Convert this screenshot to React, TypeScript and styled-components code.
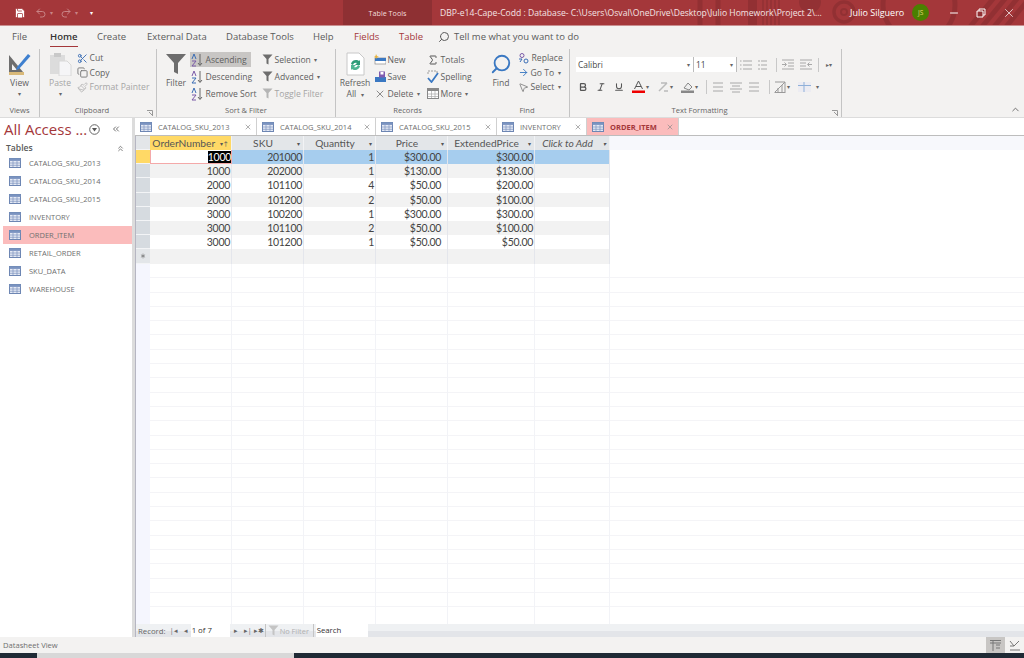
import React from 'react';
import styled, { createGlobalStyle } from 'styled-components';
import { Scissors, Copy, Paintbrush, Search, Sigma, X, ArrowRight, MousePointer2, Bold, Italic, Underline, ChevronsLeft, ChevronsUp, ChevronUp, Undo2, Redo2, Save, Minus, Asterisk } from 'lucide-react';

const GlobalStyle = createGlobalStyle`
  html, body { margin: 0; padding: 0; height: 100%; background: #fff; overflow: hidden; }
  body { font-family: "Open Sans", "Liberation Sans", sans-serif; color: #444; }
  #root { height: 658px; }
`;

const RED = '#a4373a';

const Page = styled.div`
  width: 1024px;
  height: 658px;
  display: flex;
  flex-direction: column;
  overflow: hidden;
`;

/* title bar */
const TitleBar = styled.div`
  position: relative;
  height: 25px;
  flex: none;
  display: flex;
  align-items: center;
  background: ${RED};
  color: #f4e4e4;
  font-size: 8.5px;
  overflow: hidden;
`;
const Pattern = styled.svg`
  position: absolute;
  right: 0;
  top: 0;
`;
const Qat = styled.div`
  width: 343px;
  flex: none;
  display: flex;
  align-items: center;
  padding-left: 14px;
  box-sizing: border-box;
  gap: 3px;
`;
const QatCaret = styled.span<{ $dim?: boolean; $mr?: number }>`
  font-size: 6px;
  color: ${(p) => (p.$dim ? '#c98486' : '#fff')};
  margin-right: ${(p) => p.$mr ?? 4}px;
`;
const ToolsLabel = styled.div`
  width: 89px;
  height: 25px;
  flex: none;
  display: flex;
  align-items: center;
  justify-content: center;
  background: #8e3033;
  color: #f2dcdc;
  font-size: 7.2px;
`;
const DocTitle = styled.div`
  margin-left: 8px;
  width: 410px;
  flex: none;
  white-space: nowrap;
  z-index: 1;
  font-size: 8.6px;
`;
const UserName = styled.div`
  font-size: 9px;
  color: #fff;
  z-index: 1;
  margin-right: 8px;
`;
const Avatar = styled.div`
  width: 17px;
  height: 17px;
  border-radius: 50%;
  background: #4b8000;
  color: #e3d66e;
  font-size: 6.5px;
  display: flex;
  align-items: center;
  justify-content: center;
  z-index: 1;
`;
const WinButtons = styled.div`
  display: flex;
  align-items: center;
  margin-left: 19px;
  gap: 16px;
  color: #fff;
  z-index: 1;
`;

/* ribbon tabs */
const TabRow = styled.div`
  height: 22px;
  flex: none;
  display: flex;
  align-items: center;
  padding-left: 12px;
  background: #f3f2f1;
  border-top: 1px solid #c98f90;
  box-sizing: border-box;
  font-size: 9.5px;
`;
const RibbonTab = styled.div<{ $active?: boolean; $context?: boolean; $w: number }>`
  position: relative;
  width: ${(p) => p.$w}px;
  flex: none;
  white-space: nowrap;
  color: ${(p) => (p.$context ? RED : p.$active ? '#333' : '#5a5a5a')};
  font-weight: ${(p) => (p.$active ? 600 : 400)};
  ${(p) => p.$active && `&::after { content: ""; position: absolute; left: 0; width: 28px; bottom: -5px; height: 2px; background: ${RED}; }`}
`;
const TellMe = styled.div`
  display: flex;
  align-items: center;
  gap: 4px;
  color: #5a5a5a;
  white-space: nowrap;
`;

/* ribbon */
const Ribbon = styled.div`
  height: 71px;
  flex: none;
  display: flex;
  background: #f3f2f1;
  box-sizing: border-box;
  border-bottom: 1px solid #dcdcdc;
  position: relative;
  font-size: 8.6px;
  color: #5f5f5f;
`;
const Group = styled.div<{ $w: number; $last?: boolean }>`
  width: ${(p) => p.$w}px;
  flex: none;
  height: 68px;
  margin-top: 2px;
  display: flex;
  flex-direction: column;
  box-sizing: border-box;
  border-right: ${(p) => (p.$last ? 'none' : '1px solid #c4c4c4')};
  position: relative;
`;
const GroupBody = styled.div<{ $pl?: number; $gap?: number }>`
  flex: 1;
  display: flex;
  padding-left: ${(p) => p.$pl ?? 0}px;
  gap: ${(p) => p.$gap ?? 0}px;
`;
const GroupLabel = styled.div<{ $pr?: number }>`
  height: 13px;
  line-height: 13px;
  text-align: center;
  font-size: 7.6px;
  color: #666;
  flex: none;
  padding-right: ${(p) => p.$pr ?? 0}px;
`;
const Launcher = styled.svg`
  position: absolute;
  right: 3px;
  bottom: 1px;
`;
const BigButton = styled.div<{ $w: number; $dim?: boolean }>`
  width: ${(p) => p.$w}px;
  flex: none;
  display: flex;
  flex-direction: column;
  align-items: center;
  padding-top: 2px;
  line-height: 11px;
  color: ${(p) => (p.$dim ? '#a5a5a5' : '#5f5f5f')};
`;
const BigIcon = styled.div`
  height: 25px;
  display: flex;
  align-items: center;
  margin-bottom: 2px;
`;
const ItemColumn = styled.div<{ $w?: number; $tight?: boolean; $ml?: number }>`
  width: ${(p) => (p.$w ? `${p.$w}px` : 'auto')};
  flex: none;
  display: flex;
  flex-direction: column;
  gap: ${(p) => (p.$tight ? '0' : '2px')};
  padding-top: ${(p) => (p.$tight ? '2px' : '3px')};
  margin-left: ${(p) => p.$ml ?? 0}px;
`;
const Item = styled.div<{ $dim?: boolean; $hot?: boolean; $tight?: boolean }>`
  height: ${(p) => (p.$tight ? '14.5px' : '15px')};
  display: flex;
  align-items: center;
  gap: 1.5px;
  white-space: nowrap;
  color: ${(p) => (p.$dim ? '#a5a5a5' : '#5f5f5f')};
  background: ${(p) => (p.$hot ? '#c8c6c4' : 'transparent')};
`;
const Caret = styled.span<{ $ml?: number }>`
  font-size: 6px;
  margin-left: ${(p) => p.$ml ?? 2}px;
  color: #666;
`;
const FontBox = styled.div<{ $w: number }>`
  width: ${(p) => p.$w}px;
  height: 15px;
  background: #fff;
  border-right: 1px solid #bbb;
  box-sizing: border-box;
  display: flex;
  align-items: center;
  justify-content: space-between;
  padding: 0 3px 0 2px;
  color: #444;
  font-size: 8.4px;
  flex: none;
`;
const FormatColumn = styled.div`
  display: flex;
  flex-direction: column;
  gap: 7px;
  padding: 8px 0 0 6px;
`;
const FormatRow = styled.div<{ $gap?: number; $ml?: number }>`
  display: flex;
  align-items: center;
  gap: ${(p) => p.$gap ?? 6}px;
  height: 15px;
  margin-left: ${(p) => p.$ml ?? 0}px;
`;
const MiniRule = styled.span`
  width: 1px;
  height: 14px;
  background: #c8c8c8;
  flex: none;
`;
const Collapse = styled.div`
  position: absolute;
  right: 3px;
  bottom: 2px;
  color: #666;
  display: flex;
`;

/* body */
const Body = styled.div`
  flex: 1;
  display: flex;
  min-height: 0;
`;
const Nav = styled.div`
  width: 132px;
  flex: none;
  display: flex;
  flex-direction: column;
  background: #fff;
`;
const NavHeader = styled.div`
  height: 22px;
  flex: none;
  display: flex;
  align-items: center;
  padding-left: 4px;
  color: ${RED};
  font-size: 15px;
  white-space: nowrap;
`;
const NavTools = styled.div`
  display: flex;
  align-items: center;
  color: #555;
  margin-left: 2px;
  gap: 11px;
`;
const SectionHead = styled.div`
  height: 14px;
  flex: none;
  margin: 1px 7px 0 6px;
  display: flex;
  align-items: center;
  justify-content: space-between;
  font-size: 8.6px;
  font-weight: 600;
  color: #5a5a5a;
`;
const NavList = styled.div`
  display: flex;
  flex-direction: column;
  margin-top: -1px;
`;
const NavItem = styled.div<{ $on?: boolean }>`
  height: 18px;
  margin-left: 3px;
  padding-left: 6px;
  display: flex;
  align-items: center;
  gap: 8px;
  font-size: 7.5px;
  color: #6e6e6e;
  background: ${(p) => (p.$on ? '#fbbcbc' : 'transparent')};
`;
const Main = styled.div`
  flex: 1;
  min-width: 0;
  display: flex;
  flex-direction: column;
  border-left: 3px solid #dcdcdc;
`;
const DocTabs = styled.div`
  height: 17px;
  flex: none;
  display: flex;
  background: #fff;
  border-bottom: 1px solid #bdbdbd;
`;
const DocTab = styled.div<{ $w: number; $on?: boolean }>`
  width: ${(p) => p.$w}px;
  flex: none;
  box-sizing: border-box;
  padding: 0 4px 0 5px;
  display: flex;
  align-items: center;
  gap: 6px;
  font-size: 7.5px;
  border-right: 1px solid #d0d0d0;
  color: ${(p) => (p.$on ? RED : '#6e6e6e')};
  font-weight: ${(p) => (p.$on ? 700 : 400)};
  background: ${(p) => (p.$on ? '#fbbcbc' : '#fff')};
`;
const TabName = styled.span`
  flex: 1;
  white-space: nowrap;
`;
const Sheet = styled.div`
  flex: 1;
  min-height: 0;
  display: flex;
  flex-direction: column;
  background: #fff;
  border-left: 1px solid #b6b6c2;
`;
const HeadRow = styled.div`
  display: flex;
  height: 14px;
  flex: none;
  background: #f7f8fc;
`;
const Row = styled.div<{ $bg?: string }>`
  display: flex;
  width: 474px;
  height: 14.2px;
  flex: none;
  background: ${(p) => p.$bg ?? '#fff'};
  font-family: Lato, "Liberation Sans", sans-serif;
  font-size: 10.5px;
  letter-spacing: -0.3px;
  color: #444;
`;
const Selector = styled.div<{ $bg: string }>`
  width: 14px;
  flex: none;
  box-sizing: border-box;
  background: ${(p) => p.$bg};
  border-bottom: 1px solid #f3f4f6;
  display: flex;
  align-items: center;
  justify-content: center;
  color: #555;
`;
const HeadCell = styled.div<{ $w: number; $active?: boolean; $italic?: boolean }>`
  width: ${(p) => p.$w}px;
  flex: none;
  box-sizing: border-box;
  display: flex;
  align-items: center;
  justify-content: flex-end;
  padding-right: 3px;
  font-family: Lato, "Liberation Sans", sans-serif;
  font-size: 10.2px;
  color: #555;
  font-style: ${(p) => (p.$italic ? 'italic' : 'normal')};
  border-right: 1px solid #f2f3f5;
  background: ${(p) => (p.$active ? '#ffd966' : '#e3e6e9')};
`;
const HeadText = styled.span`
  flex: 1;
  text-align: center;
  white-space: nowrap;
`;
const HeadCaret = styled.span`
  font-size: 6px;
  margin-left: 3px;
`;
const Cell = styled.div<{ $w: number; $pad?: number }>`
  width: ${(p) => p.$w}px;
  flex: none;
  box-sizing: border-box;
  text-align: right;
  padding-right: ${(p) => p.$pad ?? 1}px;
  line-height: 14px;
  border-right: 1px solid #e4e6ec;
`;
const FirstCell = styled(Cell)`
  background: #fff;
  border: 1px solid #f4a9a9;
  border-top: none;
  padding-right: 0;
`;
const Picked = styled.span`
  background: #000;
  color: #fff;
`;
const Filler = styled.div`
  flex: 1;
  min-height: 0;
  display: flex;
`;
const FillerRail = styled.div`
  width: 14px;
  flex: none;
  background: #f5f6fe;
`;
const FillerGrid = styled.div`
  flex: 1;
  background-image: repeating-linear-gradient(to bottom, #fff 0, #fff 13.3px, #f4f4f7 13.3px, #f4f4f7 14.3px);
  display: flex;
`;
const FillerCol = styled.div<{ $w: number }>`
  width: ${(p) => p.$w}px;
  flex: none;
  box-sizing: border-box;
  border-right: 1px solid #f2f3f7;
`;
const RecordBar = styled.div`
  height: 13px;
  flex: none;
  display: flex;
  background: linear-gradient(#eff1f3 0, #eff1f3 50%, #e3e5e9 50%);
  font-size: 7.8px;
  color: #666;
`;
const RecordNav = styled.div`
  display: flex;
  align-items: center;
  padding-left: 2px;
  white-space: nowrap;
`;
const RecGlyph = styled.span<{ $w: number }>`
  width: ${(p) => p.$w}px;
  flex: none;
  text-align: center;
  font-size: 7px;
`;
const RecInput = styled.div<{ $w: number; $ml?: number }>`
  width: ${(p) => p.$w}px;
  margin-left: ${(p) => p.$ml ?? 0}px;
  height: 13px;
  background: #fff;
  color: #333;
  line-height: 13px;
  padding-left: 1px;
  box-sizing: border-box;
  flex: none;
`;
const NoFilter = styled.span`
  color: #b0b0b0;
  font-size: 7.4px;
  width: 33px;
  flex: none;
  margin-left: 1px;
`;
const BarRule = styled.span<{ $ml?: number }>`
  width: 1px;
  height: 13px;
  background: #c4c4c4;
  margin: 0 2px 0 ${(p) => p.$ml ?? 2}px;
  flex: none;
`;
const Status = styled.div`
  height: 16px;
  flex: none;
  display: flex;
  align-items: center;
  justify-content: space-between;
  background: #f3f2f1;
  font-size: 7.6px;
  color: #6e6e6e;
  padding-left: 3px;
`;
const ViewButtons = styled.div`
  display: flex;
  height: 16px;
`;
const ViewButton = styled.div<{ $on?: boolean }>`
  width: 19px;
  height: 16px;
  display: flex;
  align-items: center;
  justify-content: center;
  background: ${(p) => (p.$on ? '#c8c6c4' : 'transparent')};
`;
const Taskbar = styled.div`
  height: 5px;
  flex: none;
  display: flex;
  background: #1f2a35;
`;
const TaskWindow = styled.div`
  width: 257px;
  margin-left: 37px;
  background: #d8d8d8;
`;

const TableIcon = () => (
  <svg width="12" height="10" viewBox="0 0 12 10" style={{ flex: 'none' }}>
    <rect x="0.5" y="0.5" width="11" height="9" fill="#e4e9f4" stroke="#6d86b3" />
    <rect x="0.5" y="0.5" width="11" height="2.4" fill="#7a93c0" />
    <path d="M4 3v6M8 3v6M1 5h10M1 7.300h10" stroke="#7d94bd" strokeWidth="0.7" />
  </svg>
);

const Funnel = ({ size = 22, color = '#6d6d6d' }: { size?: number; color?: string }) => (
  <svg width={size} height={size} viewBox="0 0 22 22" style={{ flex: 'none' }}>
    <path d="M1 1h20l-8 9v11l-4-2v-9z" fill={color} />
  </svg>
);

const SortIcon = ({ down }: { down?: boolean }) => (
  <svg width="14" height="14" viewBox="0 0 14 14" style={{ flex: 'none' }}>
    <path d="M2 6l2-5 2 5" fill="none" stroke={down ? '#7a5aa8' : '#3a6db5'} strokeWidth="1" />
    <path d="M2 8h4l-4 5h4" fill="none" stroke={down ? '#3a6db5' : '#7a5aa8'} strokeWidth="1" />
    <path d="M10 1v11M8 10l2 2.5 2-2.5" fill="none" stroke="#666" strokeWidth="1" />
  </svg>
);

const ViewIcon = () => (
  <svg width="23" height="23" viewBox="0 0 23 23">
    <path d="M1 3l14 17H1z" fill="#6e6e6e" />
    <path d="M4 12l5 6H4z" fill="#f3f2f1" />
    <path d="M1 20h15v3H1z" fill="#d9b979" />
    <path d="M9 15L20 2l2.500 2L11 17l-3 1z" fill="#3f80cf" />
  </svg>
);

const PasteIcon = () => (
  <svg width="23" height="24" viewBox="0 0 23 24">
    <rect x="1" y="3" width="15" height="19" fill="#dcdcdc" />
    <rect x="5" y="1" width="7" height="4" fill="#c9c9c9" />
    <path d="M10 9h8l4 4v11H10z" fill="#f5f5f7" stroke="#d8d8d8" />
  </svg>
);

const RefreshIcon = () => (
  <svg width="19" height="24" viewBox="0 0 19 24">
    <path d="M1 1h12l5 5v17H1z" fill="#fff" stroke="#c8c8c8" />
    <path d="M5 12a5 5 0 0 1 8-3l1-1v5h-5l2-2a3 3 0 0 0-4 2z" fill="#2f9c78" />
    <path d="M14 14a5 5 0 0 1-8 3l-1 1v-5h5l-2 2a3 3 0 0 0 4-2z" fill="#4fb592" />
  </svg>
);

const SmallRec = ({ type }: { type: 'new' | 'save' | 'more' | 'replace' | 'spell' }) => {
  if (type === 'new') {
    return (
      <svg width="12" height="11" viewBox="0 0 12 11" style={{ flex: 'none' }}>
        <rect x="1" y="4" width="11" height="6" fill="#fff" stroke="#8a8a8a" strokeWidth="0.7" />
        <rect x="1" y="4" width="11" height="3" fill="#3a78c2" />
        <path d="M2 0l1 2 2 1-2 .6L2 5 1.400 3.600 0 3l1.500-1z" fill="#e8b23a" />
      </svg>
    );
  }
  if (type === 'save') {
    return (
      <svg width="12" height="12" viewBox="0 0 12 12" style={{ flex: 'none' }}>
        <rect x="1" y="6" width="11" height="5" fill="#3a78c2" />
        <rect x="5" y="0.500" width="6" height="6" fill="#7f5bb0" />
        <rect x="6.500" y="1" width="3" height="2.500" fill="#fff" />
      </svg>
    );
  }
  if (type === 'more') {
    return (
      <svg width="12" height="11" viewBox="0 0 12 11" style={{ flex: 'none' }}>
        <rect x="0.500" y="0.500" width="11" height="10" fill="#fff" stroke="#888" />
        <rect x="0.500" y="0.500" width="11" height="2.500" fill="#888" />
        <path d="M4.500 3v7M8 3v7M1 6h10M1 8.500h10" stroke="#aaa" strokeWidth="0.7" />
      </svg>
    );
  }
  if (type === 'spell') {
    return (
      <svg width="12" height="13" viewBox="0 0 12 13" style={{ flex: 'none' }}>
        <path d="M1 8l3.500 4L11 3" fill="none" stroke="#3a78c2" strokeWidth="1.800" />
        <path d="M1 4V1h9v2" fill="none" stroke="#888" strokeWidth="0.800" strokeDasharray="2 1" />
      </svg>
    );
  }
  return (
    <svg width="12" height="11" viewBox="0 0 12 11" style={{ flex: 'none' }}>
      <circle cx="4" cy="2.500" r="2" fill="none" stroke="#7a5aa8" />
      <circle cx="8" cy="8" r="2" fill="none" stroke="#3a6db5" />
      <path d="M1 6h3L2 9" fill="none" stroke="#3a6db5" />
    </svg>
  );
};

const Lines = ({ kind }: { kind: 'left' | 'center' | 'right' | 'bullets' | 'numbers' | 'out' | 'in' }) => {
  const paths: Record<string, string> = {
    left: 'M1 2h10M1 6h10M1 10h10',
    center: 'M0 2h12M2 5h8M0 8h12M2 11h8',
    right: 'M1 2h10M1 6h10M1 10h10',
    bullets: 'M3 2h9M3 6h9M3 10h9M0 2h1.500M0 6h1.500M0 10h1.500',
    numbers: 'M1 1v2M1 5v2M1 9v2M3 2h6M3 6h6M3 10h6',
    out: 'M0 1h12M6 4h6M6 7h6M0 10h12M0 5.500h4M2.500 3.500l2 2-2 2',
    in: 'M0 1h12M0 4h6M0 7h6M0 10h12M12 5.500H8M9.500 3.500l-2 2 2 2',
  };
  return (
    <svg width="13" height="12" viewBox="0 0 13 12" style={{ flex: 'none' }}>
      <path d={paths[kind]} fill="none" stroke="#a8a8a8" strokeWidth="1" />
    </svg>
  );
};

const columns = [82, 72, 72, 72, 87, 75];
const rows = [
  ['1000', '201000', '1', '$300.00', '$300.00'],
  ['1000', '202000', '1', '$130.00', '$130.00'],
  ['2000', '101100', '4', '$50.00', '$200.00'],
  ['2000', '101200', '2', '$50.00', '$100.00'],
  ['3000', '100200', '1', '$300.00', '$300.00'],
  ['3000', '101100', '2', '$50.00', '$100.00'],
  ['3000', '101200', '1', '$50.00', '$50.00'],
];
const rowColor = ['#a6cdee', '#f2f2f2', '#fff', '#f2f2f2', '#fff', '#f2f2f2', '#fff'];
const navTables = ['CATALOG_SKU_2013', 'CATALOG_SKU_2014', 'CATALOG_SKU_2015', 'INVENTORY', 'ORDER_ITEM', 'RETAIL_ORDER', 'SKU_DATA', 'WAREHOUSE'];
const docTabs: [string, number][] = [['CATALOG_SKU_2013', 122], ['CATALOG_SKU_2014', 119], ['CATALOG_SKU_2015', 121], ['INVENTORY', 90], ['ORDER_ITEM', 92]];
const headers = ['OrderNumber', 'SKU', 'Quantity', 'Price', 'ExtendedPrice', 'Click to Add'];
const ribbonTabs: [string, number][] = [['File', 38], ['Home', 47], ['Create', 50], ['External Data', 79], ['Database Tools', 87], ['Help', 41]];

const App = () => (
  <Page>
    <GlobalStyle />
    <TitleBar>
      <Pattern width="330" height="25" viewBox="0 0 330 25">
        <g fill="none" stroke="#000" strokeOpacity="0.11">
          <circle cx="150" cy="12" r="10" strokeWidth="3.500" />
          <circle cx="150" cy="12" r="3" strokeWidth="2" />
          <path d="M6 -2v30M24 -2v30" strokeWidth="5" />
          <path d="M58.500 -2v30" strokeWidth="9" />
          <path d="M69 -2v30M73 -2v30M77 -2v30M81 -2v30M85 -2v30" strokeWidth="1.500" />
          <circle cx="225" cy="5" r="36" strokeWidth="5" />
          <path d="M275 28l28-34M287 28l28-34M299 28l28-34M311 28l28-34" strokeWidth="5" />
        </g>
        <circle cx="116" cy="2" r="11" fill="#000" fillOpacity="0.1" />
      </Pattern>
      <Qat>
        <Save size={12} color="#fff" fill="#fff" stroke={RED} strokeWidth={1.5} />
        <Undo2 size={12} color="#c98486" style={{ marginLeft: 6 }} />
        <QatCaret $dim>▾</QatCaret>
        <Redo2 size={12} color="#c98486" />
        <QatCaret $dim $mr={9}>▾</QatCaret>
        <QatCaret>▾</QatCaret>
      </Qat>
      <ToolsLabel>Table Tools</ToolsLabel>
      <DocTitle>DBP-e14-Cape-Codd : Database- C:\Users\Osval\OneDrive\Desktop\Julio Homework\Project 2\...</DocTitle>
      <UserName>Julio Silguero</UserName>
      <Avatar>JS</Avatar>
      <WinButtons>
        <Minus size={12} />
        <svg width="10" height="10" viewBox="0 0 10 10">
          <path d="M1 3h6v6H1zM3 3V1h6v6H7" fill="none" stroke="#fff" />
        </svg>
        <X size={14} strokeWidth={1.2} />
      </WinButtons>
    </TitleBar>
    <TabRow>
      {ribbonTabs.map(([name, w]) => (
        <RibbonTab key={name} $w={w} $active={name === 'Home'}>{name}</RibbonTab>
      ))}
      <RibbonTab $w={45} $context>Fields</RibbonTab>
      <RibbonTab $w={39} $context>Table</RibbonTab>
      <TellMe>
        <Search size={12} style={{ transform: 'scaleX(-1)' }} />
        Tell me what you want to do
      </TellMe>
    </TabRow>
    <Ribbon>
      <Group $w={40}>
        <GroupBody $pl={8}>
          <BigButton $w={23}>
            <BigIcon><ViewIcon /></BigIcon>
            View
            <Caret $ml={0}>▾</Caret>
          </BigButton>
        </GroupBody>
        <GroupLabel>Views</GroupLabel>
      </Group>
      <Group $w={117}>
        <GroupBody $pl={9} $gap={6}>
          <BigButton $w={22} $dim>
            <BigIcon><PasteIcon /></BigIcon>
            Paste
            <Caret $ml={0}>▾</Caret>
          </BigButton>
          <ItemColumn $tight>
            <Item $tight><Scissors size={11} color="#3a6db5" />Cut</Item>
            <Item $tight><Copy size={11} color="#777" />Copy</Item>
            <Item $tight $dim><Paintbrush size={11} color="#bbb" />Format Painter</Item>
          </ItemColumn>
        </GroupBody>
        <GroupLabel $pr={12}>Clipboard</GroupLabel>
        <Launcher width="6" height="6" viewBox="0 0 6 6"><path d="M0 .5h5.500V6M2 2l3 3" fill="none" stroke="#999" /></Launcher>
      </Group>
      <Group $w={179}>
        <GroupBody $pl={8} $gap={3}>
          <BigButton $w={22}>
            <BigIcon><Funnel /></BigIcon>
            Filter
          </BigButton>
          <ItemColumn $w={61}>
            <Item $hot><SortIcon />Ascending</Item>
            <Item><SortIcon down />Descending</Item>
            <Item><SortIcon />Remove Sort</Item>
          </ItemColumn>
          <ItemColumn $ml={8}>
            <Item><Funnel size={11} />Selection <Caret>▾</Caret></Item>
            <Item><Funnel size={11} />Advanced <Caret>▾</Caret></Item>
            <Item $dim><Funnel size={11} color="#b5b5b5" />Toggle Filter</Item>
          </ItemColumn>
        </GroupBody>
        <GroupLabel>Sort &amp; Filter</GroupLabel>
      </Group>
      <Group $w={149} $last>
        <GroupBody $pl={4} $gap={4}>
          <BigButton $w={30}>
            <BigIcon><RefreshIcon /></BigIcon>
            Refresh
            <span>All <Caret>▾</Caret></span>
          </BigButton>
          <ItemColumn $w={49}>
            <Item><SmallRec type="new" />New</Item>
            <Item><SmallRec type="save" />Save</Item>
            <Item><X size={12} strokeWidth={1.4} />Delete <Caret>▾</Caret></Item>
          </ItemColumn>
          <ItemColumn>
            <Item><Sigma size={12} color="#555" />Totals</Item>
            <Item><SmallRec type="spell" />Spelling</Item>
            <Item><SmallRec type="more" />More <Caret>▾</Caret></Item>
          </ItemColumn>
        </GroupBody>
        <GroupLabel $pr={6}>Records</GroupLabel>
      </Group>
      <Group $w={85}>
        <GroupBody $pl={4} $gap={5}>
          <BigButton $w={24}>
            <BigIcon><Search size={22} color="#3a78c2" style={{ transform: 'scaleX(-1)' }} /></BigIcon>
            Find
          </BigButton>
          <ItemColumn $tight>
            <Item $tight><SmallRec type="replace" />Replace</Item>
            <Item $tight><ArrowRight size={11} color="#3a78c2" />Go To <Caret>▾</Caret></Item>
            <Item $tight><MousePointer2 size={11} color="#888" />Select <Caret>▾</Caret></Item>
          </ItemColumn>
        </GroupBody>
        <GroupLabel>Find</GroupLabel>
      </Group>
      <Group $w={272}>
        <GroupBody>
          <FormatColumn>
            <FormatRow $gap={0}>
              <FontBox $w={118}>Calibri<Caret>▾</Caret></FontBox>
              <FontBox $w={43}>11<Caret>▾</Caret></FontBox>
              <FormatRow $ml={3} $gap={5}>
                <Lines kind="bullets" />
                <Lines kind="numbers" />
                <MiniRule />
                <Lines kind="out" />
                <Lines kind="in" />
                <MiniRule />
                <Caret>▸▾</Caret>
              </FormatRow>
            </FormatRow>
            <FormatRow $gap={8}>
              <Bold size={10} strokeWidth={3} color="#555" style={{ marginLeft: 2 }} />
              <Italic size={10} strokeWidth={2.5} color="#555" />
              <Underline size={10} strokeWidth={2.5} color="#555" />
              <svg width="13" height="13" viewBox="0 0 13 13"><path d="M2.500 9L6.500 1l4 8M4 6.500h5" fill="none" stroke="#555" /><rect y="10.500" width="13" height="2.500" fill="#e00" /></svg>
              <Caret $ml={-7}>▾</Caret>
              <svg width="12" height="12" viewBox="0 0 12 12"><path d="M2 10L10 2M4 2h6M7 10h4" fill="none" stroke="#bbb" strokeWidth="1.500" /></svg>
              <Caret $ml={-7}>▾</Caret>
              <svg width="13" height="13" viewBox="0 0 13 13"><path d="M3 8l4-5 4 4-3 3z" fill="#eee" stroke="#888" /><rect y="10.500" width="13" height="2.500" fill="#888" /></svg>
              <Caret $ml={-7}>▾</Caret>
              <MiniRule />
              <FormatRow $ml={-3} $gap={5}>
                <Lines kind="left" />
                <Lines kind="center" />
                <Lines kind="right" />
              </FormatRow>
              <MiniRule />
              <svg width="12" height="12" viewBox="0 0 12 12" style={{ marginLeft: -4 }}><path d="M.5 11.500h11M1 1h10v10M1 11L11 1M4 11V7M8 11V4" fill="none" stroke="#999" /></svg>
              <Caret $ml={-7}>▾</Caret>
              <svg width="13" height="10" viewBox="0 0 13 10"><rect width="13" height="10" fill="#ececf2" /><path d="M0 3.500h13M6 0v10" stroke="#8fb0d9" /></svg>
              <Caret $ml={-3}>▾</Caret>
            </FormatRow>
          </FormatColumn>
        </GroupBody>
        <GroupLabel $pr={12}>Text Formatting</GroupLabel>
        <Launcher width="6" height="6" viewBox="0 0 6 6"><path d="M0 .5h5.500V6M2 2l3 3" fill="none" stroke="#999" /></Launcher>
      </Group>
      <Collapse><ChevronUp size={11} /></Collapse>
    </Ribbon>
    <Body>
      <Nav>
        <NavHeader>
          All Access ...
          <NavTools>
            <svg width="11" height="11" viewBox="0 0 11 11"><circle cx="5.500" cy="5.500" r="4.800" fill="none" stroke="#666" /><path d="M3 4h5L5.500 7.500z" fill="#555" /></svg>
            <ChevronsLeft size={10} />
          </NavTools>
        </NavHeader>
        <SectionHead>Tables<ChevronsUp size={9} /></SectionHead>
        <NavList>
          {navTables.map((name) => (
            <NavItem key={name} $on={name === 'ORDER_ITEM'}>
              <TableIcon />
              {name}
            </NavItem>
          ))}
        </NavList>
      </Nav>
      <Main>
        <DocTabs>
          {docTabs.map(([name, w]) => (
            <DocTab key={name} $w={w} $on={name === 'ORDER_ITEM'}>
              <TableIcon />
              <TabName>{name}</TabName>
              <X size={8} color="#888" />
            </DocTab>
          ))}
        </DocTabs>
        <Sheet>
          <HeadRow>
            <Selector $bg="#e3e6e9" />
            {headers.map((h, i) => (
              <HeadCell key={h} $w={columns[i]} $active={i === 0} $italic={i === 5}>
                <HeadText>{h}</HeadText>
                <HeadCaret>{i === 0 ? '▾↑' : '▾'}</HeadCaret>
              </HeadCell>
            ))}
          </HeadRow>
          {rows.map((r, i) => (
            <Row key={i} $bg={rowColor[i]}>
              <Selector $bg={i === 0 ? '#ffd966' : '#d6dbe0'} />
              {r.map((v, j) =>
                i === 0 && j === 0 ? (
                  <FirstCell key={j} $w={columns[j]}><Picked>{v}</Picked></FirstCell>
                ) : (
                  <Cell key={j} $w={columns[j]} $pad={j === 3 ? 6 : 1}>{v}</Cell>
                ),
              )}
              <Cell $w={columns[5]} />
            </Row>
          ))}
          <Row $bg="#f2f2f2">
            <Selector $bg="#e3e6e9"><Asterisk size={8} strokeWidth={1.5} /></Selector>
            {columns.map((w, i) => <Cell key={i} $w={w} />)}
          </Row>
          <Filler>
            <FillerRail />
            <FillerGrid>
              {columns.map((w, i) => <FillerCol key={i} $w={w} />)}
            </FillerGrid>
          </Filler>
          <RecordBar>
            <RecordNav>
              Record:
              <RecGlyph $w={16}>|◂</RecGlyph>
              <RecGlyph $w={9}>◂</RecGlyph>
              <RecInput $w={39}>1 of 7</RecInput>
              <RecGlyph $w={12}>▸</RecGlyph>
              <RecGlyph $w={12}>▸|</RecGlyph>
              <RecGlyph $w={9}>▸✱</RecGlyph>
              <BarRule />
              <Funnel size={11} color="#c4c4c4" />
              <NoFilter>No Filter</NoFilter>
              <BarRule $ml={0} />
              <RecInput $w={52}>Search</RecInput>
            </RecordNav>
          </RecordBar>
        </Sheet>
      </Main>
    </Body>
    <Status>
      Datasheet View
      <ViewButtons>
        <ViewButton $on>
          <svg width="11" height="11" viewBox="0 0 11 11"><path d="M0 .5h11M3 1v10M0 3h11M6 5h4M6 8h4" fill="none" stroke="#777" /></svg>
        </ViewButton>
        <ViewButton>
          <svg width="11" height="11" viewBox="0 0 11 11"><path d="M1 1l4 5 5-5M1 6l4 0M1 10h10" fill="none" stroke="#777" /></svg>
        </ViewButton>
      </ViewButtons>
    </Status>
    <Taskbar><TaskWindow /></Taskbar>
  </Page>
);

export default App;
